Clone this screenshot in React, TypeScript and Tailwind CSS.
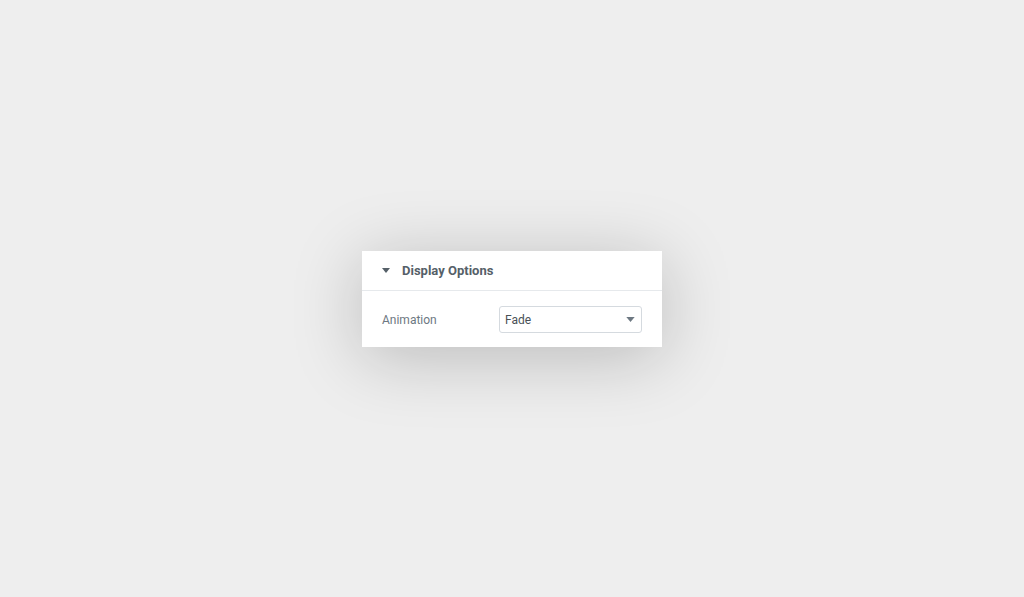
export default function App() {
  return (
    <div className="flex h-[597px] w-full items-center justify-center bg-[#eeeeee] font-['Roboto',sans-serif]">
      <section className="w-[300px] bg-white shadow-[0_10px_70px_rgba(0,0,0,0.22)]">
        <header className="flex h-[40px] items-center border-b border-[#e6e9ec] pl-[20px] pt-[1px]">
          <svg viewBox="0 0 10 6" className="h-[5px] w-[8px] text-[#556068]" aria-hidden="true">
            <path d="M0 0h10L5 6z" fill="currentColor" />
          </svg>
          <h2 className="ml-[12px] text-[13px] font-bold text-[#556068]">Display Options</h2>
        </header>
        <div className="flex h-[56px] items-center justify-between pl-[20px] pr-[20px] pt-[2px]">
          <span className="text-[12px] text-[#6d7882]">Animation</span>
          <div className="flex h-[27px] w-[143px] items-center justify-between rounded-[3px] border border-[#d5dadf] pl-[5px] pr-[6px]">
            <span className="text-[12px] text-[#495157]">Fade</span>
            <svg viewBox="0 0 10 6" className="h-[5px] w-[9px] text-[#6d7882]" aria-hidden="true">
              <path d="M0 0h10L5 6z" fill="currentColor" />
            </svg>
          </div>
        </div>
      </section>
    </div>
  );
}
